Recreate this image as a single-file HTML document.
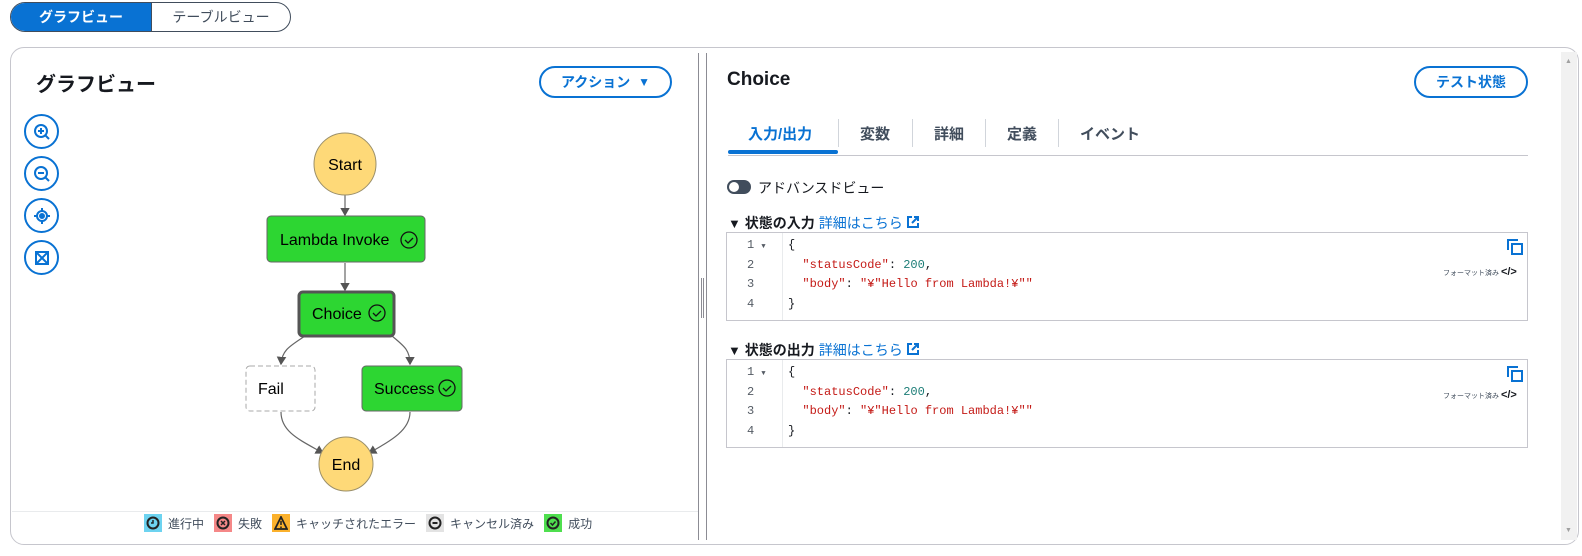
<!DOCTYPE html>
<html><head><meta charset="utf-8"><style>
*{box-sizing:border-box;margin:0;padding:0}
body{width:1582px;height:556px;background:#fff;font-family:"Liberation Sans","Noto Sans CJK JP",sans-serif;color:#16191f;position:relative;overflow:hidden}
.abs{position:absolute}
.seg{left:10px;top:2px;height:30px;width:281px;border:1px solid #414d5c;border-radius:16px;overflow:hidden;display:flex;font-size:14px;font-weight:bold}
.seg div{height:100%;display:flex;align-items:center;justify-content:center}
.outer{left:10px;top:47px;width:1569px;height:498px;border:1px solid #c6c6cd;border-radius:14px}
.btn{border:2px solid #0972d3;border-radius:16px;color:#0972d3;font-weight:bold;font-size:14px;display:flex;align-items:center;justify-content:center;height:32px}
.zb{width:35px;height:35px;border:2px solid #0972d3;border-radius:50%;left:24px;display:flex;align-items:center;justify-content:center}
.tab{top:118px;height:30px;font-size:15px;font-weight:bold;color:#414d5c;display:flex;align-items:center}
.code{left:726px;width:802px;height:89px;border:1px solid #c6c6cd}
.ln{position:absolute;left:0;top:0;width:56px;height:100%;border-right:1px solid #e9ebed;font-family:"Liberation Mono",monospace;font-size:12px;color:#545b64}
.ln div,.cd div{height:19.7px;line-height:19.7px}
.ln div{padding-left:20px}
.ln{padding-top:3px}
.cd{position:absolute;left:61px;top:3px;font-family:"Liberation Mono",monospace;font-size:12px;color:#16191f;white-space:pre}
.s{color:#c41a16}.n{color:#1c7d77}
.hdr{font-size:14px;font-weight:bold;left:728px}
.hdr a{color:#0972d3;font-weight:normal;text-decoration:none;margin-left:4px}
.leg{top:512px;height:22px;font-size:12px;color:#414d5c;display:flex;align-items:center}
.li{width:18px;height:18px;display:inline-flex;align-items:center;justify-content:center;margin-right:6px}
</style></head><body>
<div class="abs seg"><div style="width:140px;background:#0972d3;color:#fff">グラフビュー</div><div style="flex:1;color:#414d5c;font-weight:normal;border-left:1px solid #414d5c">テーブルビュー</div></div>
<div class="abs outer"></div>
<div class="abs" style="left:1561px;top:52px;width:16px;height:488px;background:#f1f1f1"></div>
<div class="abs" style="left:1565px;top:58px;font-size:7px;color:#a0a0a0">▲</div>
<div class="abs" style="left:1565px;top:527px;font-size:7px;color:#a0a0a0">▼</div>
<div class="abs" style="left:698px;top:53px;width:1px;height:487px;background:#8c8c94"></div>
<div class="abs" style="left:706px;top:53px;width:1px;height:487px;background:#8c8c94"></div>
<div class="abs" style="left:701px;top:278px;width:1px;height:40px;background:#8c8c94"></div>
<div class="abs" style="left:703px;top:278px;width:1px;height:40px;background:#8c8c94"></div>

<div class="abs" style="left:36px;top:68px;font-size:20px;font-weight:bold">グラフビュー</div>
<div class="abs btn" style="left:539px;top:66px;width:133px">アクション&nbsp;&nbsp;<span style="font-size:12px">▼</span></div>

<div class="abs zb" style="top:114px"><svg width="20" height="20" viewBox="0 0 20 20" fill="none" stroke="#0972d3" stroke-width="2"><circle cx="9" cy="9" r="6"/><path d="M13 13l4 4M6 9h6M9 6v6"/></svg></div>
<div class="abs zb" style="top:156px"><svg width="20" height="20" viewBox="0 0 20 20" fill="none" stroke="#0972d3" stroke-width="2"><circle cx="9" cy="9" r="6"/><path d="M13 13l4 4M6 9h6"/></svg></div>
<div class="abs zb" style="top:198px"><svg width="20" height="20" viewBox="0 0 20 20" fill="none" stroke="#0972d3" stroke-width="2"><circle cx="10" cy="10" r="5"/><circle cx="10" cy="10" r="2" fill="#0972d3"/><path d="M10 2v3M10 15v3M2 10h3M15 10h3"/></svg></div>
<div class="abs zb" style="top:240px"><svg width="18" height="18" viewBox="0 0 18 18" fill="none" stroke="#0972d3" stroke-width="2"><rect x="3" y="3" width="12" height="12"/><path d="M3 3l12 12M15 3L3 15"/></svg></div>

<svg class="abs" style="left:0;top:0" width="698" height="510" font-family="Liberation Sans, sans-serif">
<defs><marker id="ar" markerWidth="8" markerHeight="8" refX="6" refY="4" orient="auto"><path d="M0,0L7,4L0,8z" fill="#555"/></marker></defs>
<g stroke="#666" stroke-width="1.2" fill="none">
<path d="M345 194V215" marker-end="url(#ar)"/>
<path d="M345 263V290" marker-end="url(#ar)"/>
<path d="M305 336C290 346 282 350 281 364" marker-end="url(#ar)"/>
<path d="M392 336C404 346 410 350 410 364" marker-end="url(#ar)"/>
<path d="M281 412C281 432 300 440 323 453" marker-end="url(#ar)"/>
<path d="M410 412C410 430 392 440 369 453" marker-end="url(#ar)"/>
</g>
<ellipse cx="345" cy="164" rx="31" ry="31" fill="#fed978" stroke="#9a8f6a"/>
<text x="345" y="170" text-anchor="middle" font-size="16">Start</text>
<rect x="267" y="216" width="158" height="46" rx="4" fill="#2dd632" stroke="#666"/>
<text x="280" y="245" font-size="16">Lambda Invoke</text>
<circle cx="409" cy="240" r="8" fill="none" stroke="#111" stroke-width="1.3"/><path d="M405 240l3 3 5-5" stroke="#111" fill="none" stroke-width="1.3"/>
<rect x="299" y="292" width="95" height="44" rx="4" fill="#2dd632" stroke="#555" stroke-width="3"/>
<text x="312" y="319" font-size="16">Choice</text>
<circle cx="377" cy="313" r="8" fill="none" stroke="#111" stroke-width="1.3"/><path d="M373 313l3 3 5-5" stroke="#111" fill="none" stroke-width="1.3"/>
<rect x="246" y="366" width="69" height="45" rx="4" fill="#fff" stroke="#aaa" stroke-dasharray="5,3"/>
<text x="258" y="394" font-size="16">Fail</text>
<rect x="362" y="366" width="100" height="45" rx="4" fill="#2dd632" stroke="#666"/>
<text x="374" y="394" font-size="16">Success</text>
<circle cx="447" cy="388" r="8" fill="none" stroke="#111" stroke-width="1.3"/><path d="M443 388l3 3 5-5" stroke="#111" fill="none" stroke-width="1.3"/>
<ellipse cx="346" cy="464" rx="27" ry="27" fill="#fed978" stroke="#9a8f6a"/>
<text x="346" y="470" text-anchor="middle" font-size="16">End</text>
</svg>
<div class="abs" style="left:12px;top:511px;width:686px;height:1px;background:#e9ebed"></div>
<div class="abs leg" style="left:144px">
<span class="li" style="background:#6dd3f0"><svg width="14" height="14"><circle cx="7" cy="7" r="5.5" fill="none" stroke="#222" stroke-width="2"/><path d="M7 4v3H5" stroke="#222" stroke-width="1.5" fill="none"/></svg></span>進行中
<span class="li" style="background:#f58888;margin-left:10px"><svg width="14" height="14"><circle cx="7" cy="7" r="5.5" fill="none" stroke="#222" stroke-width="2"/><path d="M5 5l4 4M9 5l-4 4" stroke="#222" stroke-width="1.5"/></svg></span>失敗
<span class="li" style="background:#fbb12c;margin-left:10px"><svg width="14" height="14"><path d="M7 1L13 13H1z" fill="none" stroke="#222" stroke-width="1.8"/><path d="M7 5v4M7 10.5v1.5" stroke="#222" stroke-width="1.5"/></svg></span>キャッチされたエラー
<span class="li" style="background:#e3e3e3;margin-left:10px"><svg width="14" height="14"><circle cx="7" cy="7" r="5.5" fill="none" stroke="#222" stroke-width="2"/><path d="M4.5 7h5" stroke="#222" stroke-width="2"/></svg></span>キャンセル済み
<span class="li" style="background:#4fdf4f;margin-left:10px"><svg width="14" height="14"><circle cx="7" cy="7" r="5.5" fill="none" stroke="#222" stroke-width="2"/><path d="M4.5 7l2 2 3-3.5" stroke="#222" stroke-width="1.5" fill="none"/></svg></span>成功
</div>

<div class="abs" style="left:727px;top:69px;font-size:19px;font-weight:bold">Choice</div>
<div class="abs btn" style="left:1414px;top:66px;width:114px">テスト状態</div>

<div class="abs tab" style="left:748px;color:#0972d3">入力/出力</div>
<div class="abs" style="left:728px;top:150px;width:110px;height:4px;background:#0972d3;border-radius:2px"></div>
<div class="abs" style="left:838px;top:119px;width:1px;height:28px;background:#d1d5db"></div>
<div class="abs tab" style="left:860px">変数</div>
<div class="abs" style="left:912px;top:119px;width:1px;height:28px;background:#d1d5db"></div>
<div class="abs tab" style="left:934px">詳細</div>
<div class="abs" style="left:985px;top:119px;width:1px;height:28px;background:#d1d5db"></div>
<div class="abs tab" style="left:1007px">定義</div>
<div class="abs" style="left:1058px;top:119px;width:1px;height:28px;background:#d1d5db"></div>
<div class="abs tab" style="left:1080px">イベント</div>
<div class="abs" style="left:728px;top:155px;width:800px;height:1px;background:#c6c6cd"></div>

<div class="abs" style="left:727px;top:180px;width:24px;height:14px;border-radius:7px;background:#414d5c"></div>
<div class="abs" style="left:729px;top:182px;width:10px;height:10px;border-radius:5px;background:#fff"></div>
<div class="abs" style="left:758px;top:178px;font-size:14px;color:#16191f">アドバンスドビュー</div>

<div class="abs hdr" style="top:213px"><span style="font-size:13px">▼</span> 状態の入力<a>詳細はこちら <svg width="12" height="12" viewBox="0 0 12 12" fill="none" stroke="#0972d3" stroke-width="2"><path d="M5 1H1v10h10V7M7 1h4v4M11 1L5 7"/></svg></a></div>
<div class="abs code" style="top:232px">
<div class="ln"><div>1 <span style="font-size:7px">▼</span></div><div>2</div><div>3</div><div>4</div></div>
<div class="cd"><div>{</div><div>  <span class="s">"statusCode"</span>: <span class="n">200</span>,</div><div>  <span class="s">"body"</span>: <span class="s">"¥"Hello from Lambda!¥""</span></div><div>}</div></div>
<svg class="abs" style="left:780px;top:6px" width="16" height="16" viewBox="0 0 16 16" fill="none" stroke="#0972d3" stroke-width="2"><path d="M1 11V1h10"/><rect x="5" y="5" width="10" height="10"/></svg>
<div class="abs" style="left:716px;top:33px;font-size:7px;color:#414d5c">フォーマット済み <b style="font-size:11px;color:#16191f">&lt;/&gt;</b></div>
</div>

<div class="abs hdr" style="top:340px"><span style="font-size:13px">▼</span> 状態の出力<a>詳細はこちら <svg width="12" height="12" viewBox="0 0 12 12" fill="none" stroke="#0972d3" stroke-width="2"><path d="M5 1H1v10h10V7M7 1h4v4M11 1L5 7"/></svg></a></div>
<div class="abs code" style="top:359px">
<div class="ln"><div>1 <span style="font-size:7px">▼</span></div><div>2</div><div>3</div><div>4</div></div>
<div class="cd"><div>{</div><div>  <span class="s">"statusCode"</span>: <span class="n">200</span>,</div><div>  <span class="s">"body"</span>: <span class="s">"¥"Hello from Lambda!¥""</span></div><div>}</div></div>
<svg class="abs" style="left:780px;top:6px" width="16" height="16" viewBox="0 0 16 16" fill="none" stroke="#0972d3" stroke-width="2"><path d="M1 11V1h10"/><rect x="5" y="5" width="10" height="10"/></svg>
<div class="abs" style="left:716px;top:29px;font-size:7px;color:#414d5c">フォーマット済み <b style="font-size:11px;color:#16191f">&lt;/&gt;</b></div>
</div>
</body></html>
